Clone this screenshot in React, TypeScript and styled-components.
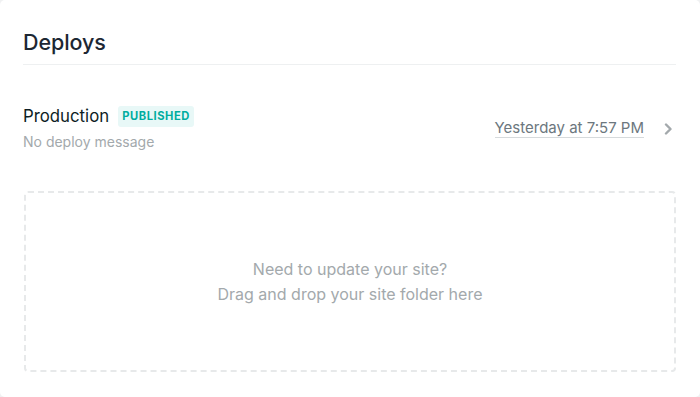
import React from "react";
import styled, { createGlobalStyle } from "styled-components";

const Global = createGlobalStyle`
  html, body { margin: 0; padding: 0; background: #f0f1f2; }
  body { font-family: Inter, "Noto Sans", "Liberation Sans", sans-serif; -webkit-font-smoothing: antialiased; }
  * { box-sizing: border-box; }
`;

const Card = styled.section`
  width: 700px;
  height: 397px;
  background: #ffffff;
  border-radius: 5px;
  padding: 0 24px 0 23px;
  display: flex;
  flex-direction: column;
`;

const Header = styled.header`
  height: 65px;
  border-bottom: 1px solid #eef0f1;
  display: flex;
  align-items: flex-end;
  padding-bottom: 9px;
`;

const Title = styled.h2`
  margin: 0;
  font-size: 21.5px;
  font-weight: 500;
  color: #1d2733;
  line-height: 26px;
  letter-spacing: -0.1px;
`;

const DeployRow = styled.div`
  display: flex;
  justify-content: space-between;
  align-items: flex-start;
  padding-top: 40px;
  height: 126px;
`;

const Info = styled.div`
  display: flex;
  flex-direction: column;
  gap: 6px;
`;

const NameLine = styled.div`
  display: flex;
  align-items: center;
  gap: 9px;
`;

const Name = styled.span`
  font-size: 16.8px;
  color: #0e1e25;
  line-height: 22px;
`;

const Badge = styled.span`
  background: #e8f8f7;
  color: #00ad9f;
  font-size: 11.2px;
  font-weight: 700;
  letter-spacing: 0.55px;
  padding: 0 4px;
  height: 21px;
  line-height: 21px;
  border-radius: 3px;
`;

const Message = styled.span`
  font-size: 14px;
  color: #a3a9ac;
  line-height: 18px;
`;

const Meta = styled.div`
  display: flex;
  align-items: center;
  gap: 20px;
  padding-top: 14px;
`;

const Time = styled.span`
  font-size: 15px;
  color: #6c777e;
  line-height: 18px;
  border-bottom: 1px solid #d6dadc;
`;

const Chevron = styled.svg`
  width: 9px;
  height: 12px;
  margin-right: 3px;
`;

const Drop = styled.div`
  margin-left: 1px;
  height: 181px;
  border: 2px dashed #e7e9ea;
  border-radius: 4px;
  display: flex;
  flex-direction: column;
  align-items: center;
  justify-content: center;
`;

const DropText = styled.p`
  margin: 0;
  font-size: 16px;
  line-height: 25px;
  color: #a3a9ac;
  text-align: center;
`;

export default function App() {
  return (
    <>
      <Global />
      <Card>
        <Header>
          <Title>Deploys</Title>
        </Header>
        <DeployRow>
          <Info>
            <NameLine>
              <Name>Production</Name>
              <Badge>PUBLISHED</Badge>
            </NameLine>
            <Message>No deploy message</Message>
          </Info>
          <Meta>
            <Time>Yesterday at 7:57 PM</Time>
            <Chevron viewBox="0 0 9 12">
              <path d="M2 1.5 L6.5 6 L2 10.5" fill="none" stroke="#a3a9ac" strokeWidth="2.4" strokeLinecap="round" strokeLinejoin="round" />
            </Chevron>
          </Meta>
        </DeployRow>
        <Drop>
          <DropText>Need to update your site?</DropText>
          <DropText>Drag and drop your site folder here</DropText>
        </Drop>
      </Card>
    </>
  );
}
